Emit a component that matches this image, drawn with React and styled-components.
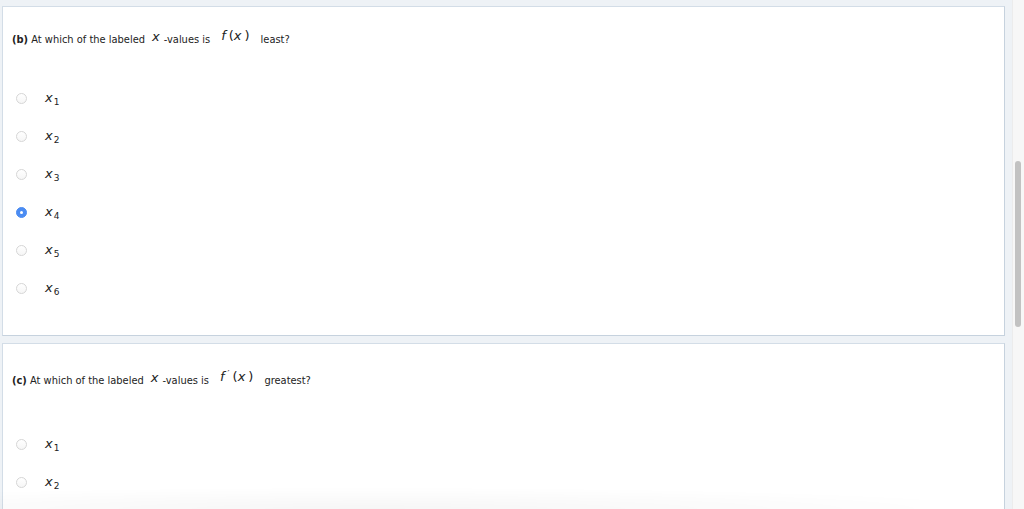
import styled, { createGlobalStyle } from 'styled-components'

const GlobalStyle = createGlobalStyle`
  html, body {
    margin: 0;
    padding: 0;
    background: #eef2f6;
    overflow: hidden;
  }
  body {
    font-family: 'DejaVu Sans', Verdana, sans-serif;
    color: #222;
  }
`

const Page = styled.div`
  width: 1012px;
  height: 509px;
  box-sizing: border-box;
  padding: 6px 7px 0 2px;
  display: flex;
  flex-direction: column;
  gap: 7px;
  overflow: hidden;
`

const Card = styled.div`
  background: #fff;
  border: 1px solid #d3dde7;
  border-right-color: #c6d2de;
  border-bottom-color: #c6d2de;
  padding: ${(p) => p.$pad};
  flex-shrink: 0;
  height: ${(p) => p.$height};
  box-sizing: border-box;
  display: flex;
  flex-direction: column;
`

const Question = styled.div`
  height: 20px;
  line-height: 20px;
  padding-left: 9px;
  font-size: 9.9px;
  white-space: nowrap;
  b {
    font-weight: bold;
  }
`

const MathVar = styled.span`
  font-family: 'DejaVu Sans', sans-serif;
  font-style: italic;
  font-size: 13px;
  margin: 0 4px 0 7px;
  vertical-align: 2px;
`

const Func = styled.span`
  font-family: 'DejaVu Sans', sans-serif;
  font-size: 13px;
  margin: 0 11px;
  vertical-align: 3px;
  i {
    font-style: italic;
    margin-right: 3px;
  }
  sup {
    font-size: 9px;
    vertical-align: 4px;
    margin-right: 3px;
  }
`

const Options = styled.div`
  display: flex;
  flex-direction: column;
  margin-top: ${(p) => p.$top};
`

const Option = styled.label`
  display: flex;
  align-items: center;
  gap: 18px;
  height: 38px;
  padding-left: 13px;
`

const Radio = styled.span`
  width: 11px;
  height: 11px;
  box-sizing: border-box;
  border-radius: 50%;
  flex-shrink: 0;
  display: flex;
  align-items: center;
  justify-content: center;
  border: 1px solid ${(p) => (p.$checked ? '#4b8cf2' : '#d6d6d6')};
  background: ${(p) =>
    p.$checked ? '#4b8cf2' : 'linear-gradient(#ffffff, #f6f6f6)'};
  &::after {
    content: '';
    display: ${(p) => (p.$checked ? 'block' : 'none')};
    width: 3px;
    height: 3px;
    border-radius: 50%;
    background: #fff;
  }
`

const Label = styled.span`
  font-family: 'DejaVu Sans', sans-serif;
  font-style: italic;
  font-size: 13px;
  color: #222;
  sub {
    font-style: normal;
    font-size: 9px;
    vertical-align: -3px;
    margin-left: 1px;
  }
`

const Scrollbar = styled.div`
  position: fixed;
  top: 0;
  right: 0;
  width: 12px;
  height: 100%;
  padding: 161px 0 0 2px;
  background: #f7f7f7;
  border-left: 1px solid #ececec;
  box-sizing: border-box;
`

const Thumb = styled.div`
  width: 6px;
  height: 166px;
  border-radius: 3px;
  background: #c2c2c2;
`

const BottomShade = styled.div`
  position: fixed;
  left: 0;
  bottom: 0;
  width: 930px;
  height: 22px;
  background: radial-gradient(ellipse 70% 100% at 40% 100%, rgba(0, 0, 0, 0.035), rgba(0, 0, 0, 0));
  pointer-events: none;
`

const OptionList = ({ count, checked, top }) => (
  <Options $top={top}>
    {Array.from({ length: count }, (_, i) => (
      <Option key={i}>
        <Radio $checked={checked === i + 1} />
        <Label>
          x<sub>{i + 1}</sub>
        </Label>
      </Option>
    ))}
  </Options>
)

const App = () => {
  return (
    <>
      <GlobalStyle />
      <Page>
        <Card $pad="19px 0 0 0" $height="330px">
          <Question>
            <b>(b)</b> At which of the labeled
            <MathVar>x</MathVar>-values is
            <Func>
              <i>f</i>(<i>x</i>)
            </Func>
            least?
          </Question>
          <OptionList count={6} checked={4} top="33px" />
        </Card>
        <Card $pad="20px 0 0 0" $height="260px">
          <Question>
            <b>(c)</b> At which of the labeled
            <MathVar>x</MathVar>-values is
            <Func>
              <i>f</i>
              <sup>′</sup>(<i>x</i>)
            </Func>
            greatest?
          </Question>
          <OptionList count={2} top="41px" />
        </Card>
      </Page>
      <BottomShade />
      <Scrollbar>
        <Thumb />
      </Scrollbar>
    </>
  )
}

export default App
